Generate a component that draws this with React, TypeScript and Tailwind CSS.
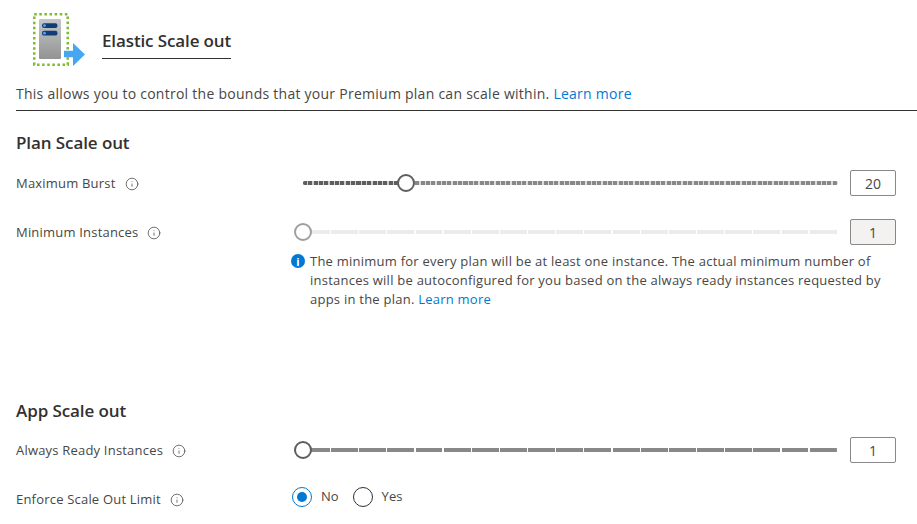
import { Info } from 'lucide-react';

function ScaleIcon() {
  return (
    <svg width="54" height="54" viewBox="0 0 54 54" className="shrink-0">
      <defs>
        <linearGradient id="server" x1="0" y1="0" x2="0" y2="1">
          <stop offset="0" stopColor="#c4c6c8" />
          <stop offset="1" stopColor="#939393" />
        </linearGradient>
      </defs>
      <rect x="1.25" y="1.25" width="33.5" height="50.5" fill="none" stroke="#7fba2f" strokeWidth="2.5" strokeDasharray="2.5 2.6" />
      <rect x="6" y="6" width="22" height="40" rx="1" fill="url(#server)" />
      <rect x="9" y="10.2" width="15.5" height="4.8" rx="2.2" fill="#0f3d78" />
      <rect x="9" y="17.8" width="15.5" height="4.8" rx="2.2" fill="#0f3d78" />
      <circle cx="11.5" cy="12.6" r="1.4" fill="#5ea0ef" />
      <circle cx="11.5" cy="20.2" r="1.4" fill="#5ea0ef" />
      <path d="M31 37.7h9V30l12 11.5-12 11.5v-8.7h-9z" fill="#47a6f2" />
    </svg>
  );
}

function LabelInfo({ children, className = 'pt-[2px]' }: { children: string; className?: string }) {
  return (
    <div className={`flex w-[287px] shrink-0 items-center gap-2 text-[13px] text-[#484644] ${className}`}>
      <span className="tracking-[0.2px]">{children}</span>
      <Info size={14} strokeWidth={1.3} className="ml-[1px] text-[#484644]" />
    </div>
  );
}

function ValueBox({ value, disabled }: { value: string; disabled?: boolean }) {
  return (
    <div
      className={`flex h-[26px] w-[46px] items-center justify-center rounded-[2px] border border-[#8a8886] text-[14px] text-[#484644] ${
        disabled ? 'bg-[#f3f2f1]' : 'bg-white'
      }`}
    >
      {value}
    </div>
  );
}

function Thumb({ left, muted }: { left: string; muted?: boolean }) {
  return (
    <span
      className={`absolute top-1/2 h-[18px] w-[18px] -translate-x-1/2 -translate-y-1/2 rounded-full border-2 bg-white ${
        muted ? 'border-[#a19f9d]' : 'border-[#605e5c]'
      } ${left}`}
    />
  );
}

export default function App() {
  return (
    <div className="h-[524px] w-[917px] overflow-hidden bg-white font-['Open_Sans','Noto_Sans',sans-serif] text-[#323130]">
      {/* header */}
      <div className="flex pl-[33px] pt-[13px]">
        <ScaleIcon />
        <h1 className="ml-[15px] mt-[16px] h-[30px] w-[129px] whitespace-nowrap border-b border-[#323130] text-[17px] font-semibold leading-[24px] tracking-[-0.12px]">
          Elastic Scale out
        </h1>
      </div>

      <p className="ml-4 mt-[17px] h-[20px] text-[14px] leading-[20px] tracking-[0.26px] text-[#484644]">
        This allows you to control the bounds that your Premium plan can scale within.{' '}
        <a className="text-[#0078d4]">Learn more</a>
      </p>
      <div className="ml-4 mt-[6px] h-px bg-[#323130]" />

      {/* plan scale out */}
      <section className="pl-4 pr-[21px]">
        <h2 className="mt-[20px] h-[24px] text-[17px] font-semibold leading-[24px] tracking-[-0.09px]">Plan Scale out</h2>

        <div className="mt-[15px] flex h-[26px] items-center">
          <LabelInfo>Maximum Burst</LabelInfo>
          <div className="relative h-[4px] w-[535px] rounded-full bg-[repeating-linear-gradient(90deg,#8a8886_0,#8a8886_4px,#dcdcdc_4px,#dcdcdc_5.35px)]">
            <div className="h-full w-[102px] rounded-l-full bg-[repeating-linear-gradient(90deg,#605e5c_0,#605e5c_4px,#d0d0d0_4px,#d0d0d0_5.35px)]" />
            <Thumb left="left-[103px]" />
          </div>
          <div className="ml-3">
            <ValueBox value="20" />
          </div>
        </div>

        <div className="mt-[23px] flex h-[26px] items-center">
          <LabelInfo>Minimum Instances</LabelInfo>
          <div className="relative h-[4px] w-[535px] rounded-full bg-[repeating-linear-gradient(90deg,#edebe9_0,#edebe9_26.9px,#ffffff_26.9px,#ffffff_28.15px)]">
            <Thumb left="left-0" muted />
          </div>
          <div className="ml-3">
            <ValueBox value="1" disabled />
          </div>
        </div>

        <div className="ml-[275px] mt-[7px] flex w-[600px] gap-[5px] text-[13px] leading-[19px] text-[#484644]">
          <span className="mt-[2px] flex h-[14px] w-[14px] shrink-0 items-center justify-center rounded-full bg-[#0078d4] text-[11px] font-bold leading-none text-white">
            i
          </span>
          <p className="w-[575px] tracking-[0.24px]">
            The minimum for every plan will be at least one instance. The actual minimum number of instances will be
            autoconfigured for you based on the always ready instances requested by apps in the plan.{' '}
            <a className="text-[#0078d4]">Learn more</a>
          </p>
        </div>
      </section>

      {/* app scale out */}
      <section className="pl-4 pr-[21px]">
        <h2 className="mt-[90px] h-[24px] text-[17px] font-semibold leading-[24px] tracking-[-0.09px]">App Scale out</h2>

        <div className="mt-[14px] flex h-[26px] items-center">
          <LabelInfo>Always Ready Instances</LabelInfo>
          <div className="relative h-[4px] w-[535px] rounded-full bg-[repeating-linear-gradient(90deg,#8a8886_0,#8a8886_26.9px,#ffffff_26.9px,#ffffff_28.15px)]">
            <Thumb left="left-0" />
          </div>
          <div className="ml-3">
            <ValueBox value="1" />
          </div>
        </div>

        <div className="mt-[24px] flex h-[20px] items-center">
          <LabelInfo className="pt-[6px]">Enforce Scale Out Limit</LabelInfo>
          <div className="-ml-[11px] flex items-center text-[13px] text-[#484644]">
            <span className="flex h-5 w-5 items-center justify-center rounded-full border border-[#0078d4]">
              <span className="h-[10px] w-[10px] rounded-full bg-[#0078d4]" />
            </span>
            <span className="ml-[9px]">No</span>
            <span className="ml-[14px] h-5 w-5 rounded-full border border-[#323130]" />
            <span className="ml-[9px]">Yes</span>
          </div>
        </div>
      </section>
    </div>
  );
}
